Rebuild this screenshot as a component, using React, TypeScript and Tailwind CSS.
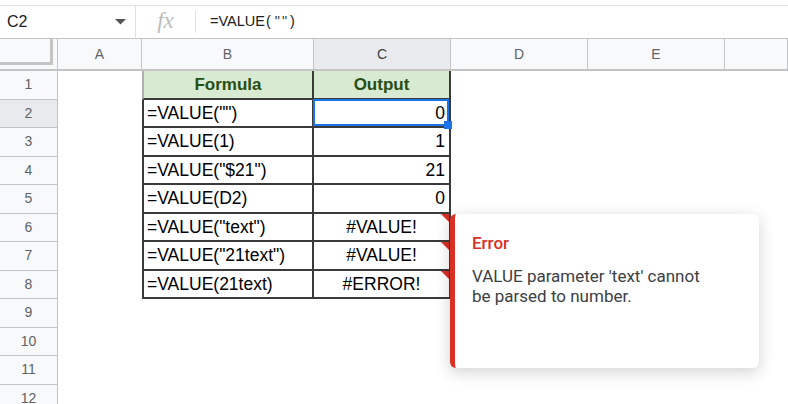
import React from "react";

type Row = {
  formula: string;
  output: string;
  align: "right" | "center";
  error?: boolean;
};

const rows: Row[] = [
  { formula: '=VALUE("")', output: "0", align: "right" },
  { formula: "=VALUE(1)", output: "1", align: "right" },
  { formula: '=VALUE("$21")', output: "21", align: "right" },
  { formula: "=VALUE(D2)", output: "0", align: "right" },
  { formula: '=VALUE("text")', output: "#VALUE!", align: "center", error: true },
  { formula: '=VALUE("21text")', output: "#VALUE!", align: "center", error: true },
  { formula: "=VALUE(21text)", output: "#ERROR!", align: "center", error: true },
];

const columns = ["A", "B", "C", "D", "E", ""];

function RowHeader({ n, selected }: { n: number; selected?: boolean }) {
  return (
    <div
      className={
        "h-[28.5px] flex items-center justify-center border-r border-b border-[#c4c4c4] text-[14px] text-[#5f6368] " +
        (selected ? "bg-[#e8eaed] text-[#3c4043]" : "bg-[#f8f9fa]")
      }
    >
      {n}
    </div>
  );
}

function Empty() {
  return <div className="h-[28.5px]" />;
}

export default function App() {
  return (
    <div className="relative w-[788px] h-[404px] overflow-hidden bg-white font-['Liberation_Sans',Arial,sans-serif] text-black">
      {/* top strip */}
      <div className="h-[6px] border-b border-[#e1e1e1]" />

      {/* Formula bar */}
      <div className="h-[32px] flex items-center">
        <div className="w-[136px] h-full flex items-center border-r border-[#e0e0e0] my-[3px]">
          <span className="pl-[7px] text-[16px] text-[#202124] flex-1">C2</span>
          <svg width="11" height="6" viewBox="0 0 11 6" className="mr-[9px]">
            <path d="M0 0 L11 0 L5.5 5.5 Z" fill="#555" />
          </svg>
        </div>
        <div className="w-[60px] h-[22px] flex items-center justify-center border-r border-[#e0e0e0]">
          <span className="font-['Liberation_Serif',serif] italic text-[23px] text-[#bdbdbd] leading-none -mt-[3px]">
            fx
          </span>
        </div>
        <div className="pl-[14px] text-[14.5px] text-[#202124] flex items-center">
          <span>=VALUE</span>
          <span className="ml-[1px]">(</span>
          <span className="ml-[4px] tracking-[2px] text-[#3c4043]">""</span>
          <span className="ml-[1px]">)</span>
        </div>
      </div>

      {/* Grid */}
      <div className="grid grid-cols-[58px_84px_172px_137px_137px_137px_1fr]">
        {/* column headers */}
        <div className="h-[33px] bg-[#f8f9fa] border-t border-b-2 border-r border-[#c4c4c4]">
          <div className="w-[53px] h-[26px] border-r-[3px] border-b-[3px] border-[#c4c4c4]" />
        </div>
        {columns.map((c) => (
          <div
            key={c || "f"}
            className={
              "h-[33px] flex items-center justify-center border-t border-b-2 border-r border-[#c4c4c4] text-[14px] " +
              (c === "C" ? "bg-[#e8eaed] text-[#3c4043]" : "bg-[#f8f9fa] text-[#5f6368]")
            }
          >
            {c}
          </div>
        ))}

        {/* row 1: table header */}
        <RowHeader n={1} />
        <Empty />
        <div className="h-[28.5px] flex items-center justify-center bg-[#d9ead3] border-l-2 border-l-[#b0b0b0] border-r-2 border-b-2 border-[#3a3a3a] font-bold text-[17px] text-[#274e13]">
          Formula
        </div>
        <div className="h-[28.5px] flex items-center justify-center bg-[#d9ead3] border-r-2 border-b-2 border-[#3a3a3a] font-bold text-[17px] text-[#274e13]">
          Output
        </div>
        <Empty />
        <Empty />
        <Empty />

        {/* rows 2-8 */}
        {rows.map((r, i) => (
          <React.Fragment key={i}>
            <RowHeader n={i + 2} selected={i === 0} />
            <Empty />
            <div className="h-[28.5px] flex items-center pl-[3px] border-l-2 border-r-2 border-b-2 border-[#3a3a3a] text-[17.5px] whitespace-nowrap">
              {r.formula}
            </div>
            <div
              className={
                "relative h-[28.5px] flex items-center border-r-2 border-b-2 border-[#3a3a3a] text-[17.5px] " +
                (r.align === "right" ? "justify-end pr-[4px]" : "justify-center")
              }
            >
              {r.output}
              {r.error && (
                <div className="absolute top-0 right-0 w-0 h-0 border-t-[8px] border-l-[8px] border-t-[#d93025] border-l-transparent" />
              )}
              {i === 0 && (
                <div className="absolute -left-px -top-px right-0 bottom-0 border-2 border-[#1a73e8] z-10">
                  <div className="absolute -right-[5px] -bottom-[5px] w-[8px] h-[8px] bg-[#1a73e8]" />
                </div>
              )}
            </div>
            <Empty />
            <Empty />
            <Empty />
          </React.Fragment>
        ))}

        {/* rows 9-12 */}
        {[9, 10, 11, 12].map((n) => (
          <React.Fragment key={n}>
            <RowHeader n={n} />
            <Empty />
            <Empty />
            <Empty />
            <Empty />
            <Empty />
            <Empty />
          </React.Fragment>
        ))}
      </div>

      {/* Error tooltip */}
      <div className="absolute left-[450px] top-[214px] w-[309px] h-[154px] z-20 bg-white rounded-[6px] border-l-[5px] border-[#d93025] shadow-[0_4px_16px_rgba(0,0,0,0.18)] pl-[17px] pt-[17px] font-['Roboto',sans-serif]">
        <div className="text-[17px] leading-6 font-medium text-[#d93025]">Error</div>
        <div className="mt-[11px] w-[240px] text-[17px] leading-[20px] text-[#3c4043]">
          VALUE parameter 'text' cannot be parsed to number.
        </div>
      </div>
    </div>
  );
}
